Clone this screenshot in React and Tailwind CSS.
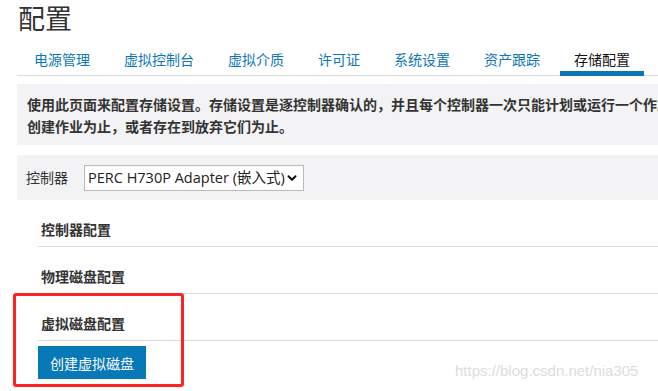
import { ChevronDown } from 'lucide-react'

const tabs = ['电源管理', '虚拟控制台', '虚拟介质', '许可证', '系统设置', '资产跟踪', '存储配置']

const sections = ['控制器配置', '物理磁盘配置', '虚拟磁盘配置']

export default function App() {
  return (
    <div
      className="relative w-[658px] h-[391px] overflow-hidden bg-white text-[#333]"
      style={{ fontFamily: '"Noto Sans CJK SC", "Noto Sans", sans-serif' }}
    >
      {/* Page title */}
      <h1 className="pl-[18px] pt-[1px] text-[27px] leading-[33px] font-normal text-[#333]">配置</h1>

      {/* Tabs */}
      <div className="ml-[17px] mt-[15px] flex border-b border-[#dcdcdc]">
        {tabs.map((tab, i) => {
          const active = i === tabs.length - 1
          return (
            <div
              key={tab}
              className={`mx-[3px] -mb-px px-[14px] pb-[2px] border-b-[5px] text-[14px] leading-[20px] whitespace-nowrap ${
                active ? 'border-[#0b77b5] text-[#111]' : 'border-transparent text-[#0b77b5]'
              }`}
            >
              {tab}
            </div>
          )
        })}
      </div>

      {/* Info box */}
      <div className="ml-[17px] mt-[8px] h-[61px] overflow-hidden bg-[#f3f3f5] pl-[10px] pt-[9px] text-[14px] font-bold leading-[22px] text-[#333] whitespace-nowrap">
        使用此页面来配置存储设置。存储设置是逐控制器确认的，并且每个控制器一次只能计划或运行一个作业，直到为其
        <br />
        创建作业为止，或者存在到放弃它们为止。
      </div>

      {/* Controller select */}
      <div className="ml-[17px] mt-[10px] h-[45px] bg-[#f3f3f5] flex items-center pl-[9px]">
        <span className="text-[14px] text-[#333] w-[58px]">控制器</span>
        <div className="flex items-center h-[26px] w-[220px] border border-[#b9b9b9] bg-white pl-[3px] pr-[4px]">
          <span
            className="flex-1 text-[14.5px] text-[#222] whitespace-nowrap"
            style={{ fontFamily: '"Open Sans", "Noto Sans CJK SC", sans-serif' }}
          >
            PERC H730P Adapter (嵌入式)
          </span>
          <ChevronDown size={14} strokeWidth={3.5} className="text-[#111]" />
        </div>
      </div>

      {/* Sections */}
      <div className="ml-[38px]">
        {sections.map(s => (
          <div
            key={s}
            className="pt-[19px] pb-[7px] pl-[3px] border-b border-[#dcdcdc] text-[14px] font-bold leading-[20px] text-[#333]"
          >
            {s}
          </div>
        ))}
        <button className="mt-[5px] h-[33px] w-[108px] bg-[#0779b6] text-white text-[14px] leading-[20px]">
          创建虚拟磁盘
        </button>
      </div>

      {/* Annotation box */}
      <div className="absolute left-[13px] top-[293px] w-[171px] h-[94px] border-[3px] border-[#ff2222] rounded-[3px]" />

      {/* Watermark */}
      <div
        className="absolute left-[455px] top-[360px] text-[15px] text-[#dcdcdc] whitespace-nowrap"
        style={{ fontFamily: '"Liberation Sans", Arial, sans-serif' }}
      >
        https://blog.csdn.net/nia305
      </div>
    </div>
  )
}
